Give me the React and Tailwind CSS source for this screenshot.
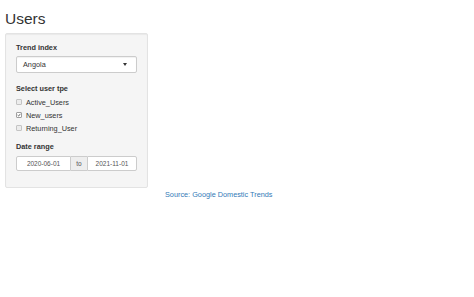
import React, { useState } from 'react';

function Check({ label, checked, onChange }) {
    return (
        <label className="flex items-center h-[13px] cursor-pointer">
            <span className={`w-[6px] h-[6px] border rounded-[1px] flex items-center justify-center ${checked ? 'border-[#a0a0a0] bg-white' : 'border-[#c4c4c4] bg-[#ececec]'}`} onClick={onChange}>
                {checked && (
                    <svg width="6" height="6" viewBox="0 0 10 10">
                        <path d="M1.5 5.2 L4 7.6 L8.6 2" fill="none" stroke="#333" strokeWidth="1.8" />
                    </svg>
                )}
            </span>
            <span className="ml-[4px] text-[7.3px] text-[#333] leading-none">{label}</span>
        </label>
    );
}

export default function App() {
    const [types, setTypes] = useState({ Active_Users: false, New_users: true, Returning_User: false });

    const toggle = (k) => setTypes({ ...types, [k]: !types[k] });

    return (
        <div className="min-h-screen bg-white px-[5px] text-[#333]" style={{ fontFamily: '"Liberation Sans", Arial, sans-serif' }}>
            <h2 className="text-[15.5px] leading-[17px] pt-[10px] mb-[6px] font-normal">Users</h2>

            <div className="flex items-start">
                {/* sidebar */}
                <div className="w-[143px] h-[155px] bg-[#f5f5f5] border border-[#e3e3e3] rounded-[2px] shadow-[inset_0_1px_1px_rgba(0,0,0,0.05)] pt-[9px] px-[10px]">
                    <div className="text-[7.3px] font-bold leading-[10.4px] mb-[2.6px]">Trend index</div>
                    <div className="h-[17px] w-[121px] bg-white border border-[#ccc] rounded-[2px] flex items-center justify-between pl-[6px] pr-[9px] shadow-[inset_0_1px_1px_rgba(0,0,0,0.06)]">
                        <span className="text-[7.3px] leading-none">Angola</span>
                        <span className="w-0 h-0 border-l-[2.5px] border-r-[2.5px] border-t-[3px] border-l-transparent border-r-transparent border-t-[#333]"></span>
                    </div>

                    <div className="text-[7.3px] font-bold leading-[10.4px] mt-[10.7px] mb-[1.8px]">Select user tpe</div>
                    <div className="flex flex-col">
                        {Object.keys(types).map((k) => (
                            <Check key={k} label={k} checked={types[k]} onChange={() => toggle(k)} />
                        ))}
                    </div>

                    <div className="text-[7.3px] font-bold leading-[10.4px] mt-[7.3px] mb-[3.6px]">Date range</div>
                    <div className="flex h-[15px] w-[121px] text-[6.5px] text-[#555]">
                        <div className="w-[55px] bg-white border border-[#ccc] rounded-l-[2px] flex items-center justify-center">2020-06-01</div>
                        <div className="w-[16px] bg-[#eee] border-y border-[#ccc] flex items-center justify-center">to</div>
                        <div className="flex-1 bg-white border border-[#ccc] rounded-r-[2px] flex items-center justify-center">2021-11-01</div>
                    </div>
                </div>

                {/* main */}
                <div className="pl-[17px] pt-[157px] leading-[10.4px]">
                    <a className="block text-[7.3px] leading-[10.4px] text-[#337ab7] whitespace-nowrap">Source: Google Domestic Trends</a>
                </div>
            </div>
        </div>
    );
}
